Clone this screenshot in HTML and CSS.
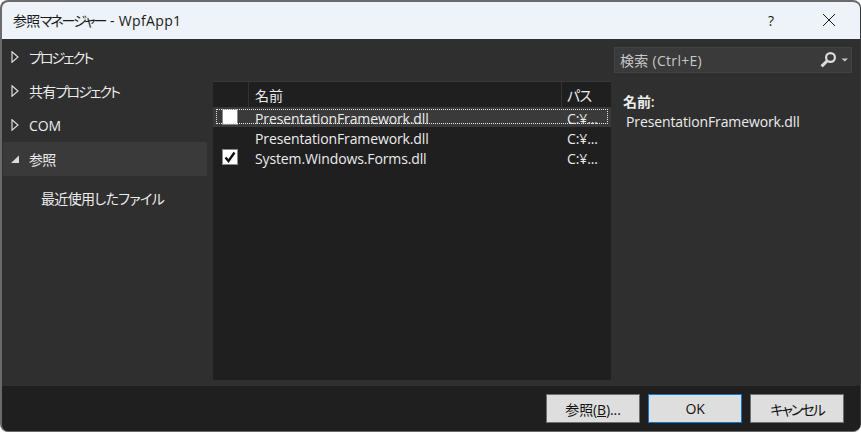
FILE: index.html
```html
<!DOCTYPE html>
<html lang="ja">
<head>
<meta charset="utf-8">
<title>参照マネージャー - WpfApp1</title>
<link rel="stylesheet" href="styles.css">
</head>
<body>
<div class="window">
  <header class="titlebar">
    <div class="title"><span class="jp">参照</span><span class="kana">マネージャー</span> <span class="title-app">- WpfApp1</span></div>
    <div class="help">?</div>
    <svg class="close" width="14" height="14" viewBox="0 0 14 14"><path d="M1 1L13 13M13 1L1 13" stroke="#1a1a1a" stroke-width="1" fill="none"/></svg>
  </header>
  <main class="content">
    <nav class="nav">
      <div class="nav-item"><svg class="arrow" width="8" height="12" viewBox="0 0 8 12"><path d="M1 .8L7 6L1 11.2Z" stroke="#dcdcdc" stroke-width="1.2" fill="none"/></svg><span class="kana">プロジェクト</span></div>
      <div class="nav-item"><svg class="arrow" width="8" height="12" viewBox="0 0 8 12"><path d="M1 .8L7 6L1 11.2Z" stroke="#dcdcdc" stroke-width="1.2" fill="none"/></svg><span><span class="jp">共有</span><span class="kana">プロジェクト</span></span></div>
      <div class="nav-item"><svg class="arrow" width="8" height="12" viewBox="0 0 8 12"><path d="M1 .8L7 6L1 11.2Z" stroke="#dcdcdc" stroke-width="1.2" fill="none"/></svg><span>COM</span></div>
      <div class="nav-item selected"><svg class="arrow" width="8" height="12" viewBox="0 0 8 12"><path d="M0 10L8 10L8 2.5Z" fill="#dcdcdc"/></svg><span class="jp">参照</span></div>
      <div class="nav-sub jp">最近使用したファイル</div>
    </nav>
    <section class="list">
      <div class="list-head">
        <div class="col-check"></div>
        <div class="col-name">名前</div>
        <div class="col-path jp">パス</div>
      </div>
      <div class="row focused">
        <div class="col-check"><span class="check"></span></div>
        <div class="cell-name">PresentationFramework.dll</div>
        <div class="cell-path">C:¥...</div>
      </div>
      <div class="row">
        <div class="col-check"></div>
        <div class="cell-name">PresentationFramework.dll</div>
        <div class="cell-path">C:¥...</div>
      </div>
      <div class="row">
        <div class="col-check"><span class="check"><svg width="14" height="14" viewBox="0 0 14 14"><path d="M2.5 7.5L5.5 11L11.5 2.5" stroke="#111" stroke-width="2.4" fill="none"/></svg></span></div>
        <div class="cell-name">System.Windows.Forms.dll</div>
        <div class="cell-path">C:¥...</div>
      </div>
    </section>
    <aside class="side">
      <div class="search">
        <span class="search-text">検索 (Ctrl+E)</span>
        <svg class="search-icon" width="30" height="20" viewBox="0 0 30 20"><circle cx="11.5" cy="7.5" r="4.4" stroke="#dcdcdc" stroke-width="2.2" fill="none"/><path d="M8 11L2.6 16.4" stroke="#dcdcdc" stroke-width="3" fill="none"/><path d="M22.5 8.5H29L25.75 11.5Z" fill="#c8c8c8"/></svg>
      </div>
      <div class="detail">
        <div class="detail-label">名前:</div>
        <div class="detail-value">PresentationFramework.dll</div>
      </div>
    </aside>
  </main>
  <footer class="footer">
    <button class="btn">参照(<u>B</u>)...</button>
    <button class="btn default">OK</button>
    <button class="btn"><span class="kana-btn">キャンセル</span></button>
  </footer>
</div>
</body>
</html>
```

FILE: styles.css
```css
* { box-sizing: border-box; }
html, body { margin: 0; padding: 0; }
body {
  width: 861px;
  height: 432px;
  overflow: hidden;
  font-family: "Open Sans", "Noto Sans CJK JP", sans-serif;
  font-size: 14px;
  letter-spacing: -0.12px;
  color: #ececec;
}
.jp { font-feature-settings: "palt"; letter-spacing: -0.65px; }
.kana { font-feature-settings: "palt"; letter-spacing: -2px; }
.kana-btn { font-feature-settings: "palt"; letter-spacing: -2px; }
.window {
  width: 861px;
  height: 432px;
  display: flex;
  flex-direction: column;
  background: #2f2f2f;
  border-top: 2px solid #6a6a6a;
  border-left: 2px solid #6a6a6a;
  border-bottom: 1px solid #6a6a6a;
  border-right: 1px solid #3a3a3a;
  border-radius: 8px;
  overflow: hidden;
}
.titlebar {
  height: 37px;
  flex: none;
  display: flex;
  align-items: center;
  background: #edf3f9;
  color: #1a1a1a;
  padding: 0 0 1px 11px;
}
.title { flex: 1; font-size: 14px; }
.title-app { letter-spacing: 0.35px; margin-left: 1px; }
.help { width: 14px; margin-right: 44px; text-align: center; font-size: 14px; }
.close { margin-right: 24px; }
.content {
  flex: 1;
  display: grid;
  grid-template-columns: 211px 398px 1fr;
  min-height: 0;
}
.nav { padding: 0 0 0 1px; width: 205px; }
.nav-item {
  height: 34px;
  display: flex;
  align-items: center;
  gap: 10px;
  padding-left: 8px;
}
.nav-item:nth-child(1) { margin-top: 1px; }
.selected { background: #3a3a3a; }
.arrow { flex: none; }
.nav-sub { padding: 13px 0 0 38px; line-height: 20px; }
.list {
  margin-top: 42px;
  margin-bottom: 6px;
  background: #1f1f1f;
  border-top: 1px solid #3a3a3a;
}
.list-head {
  height: 25px;
  display: flex;
  align-items: center;
}
.col-check { width: 35px; flex: none; display: flex; justify-content: center; align-items: center; padding-right: 2px; }
.list-head .col-check { align-self: stretch; }
.col-name {
  flex: none;
  width: 313px;
  align-self: stretch;
  display: flex;
  align-items: center;
  padding-left: 6px;
  border-left: 1px solid #333;
}
.col-path {
  flex: 1;
  align-self: stretch;
  display: flex;
  align-items: center;
  padding-left: 5px;
  border-left: 1px solid #333;
}
.row {
  height: 20px;
  display: flex;
  align-items: center;
  position: relative;
}
.cell-name, .cell-path { position: relative; top: 1px; }
.focused { background: #3a3a3a; }
.focused::after {
  content: "";
  position: absolute;
  inset: 2px 3px 3px 3px;
  border: 1px dotted #e6e6e6;
}
.check {
  width: 16px;
  height: 16px;
  background: #fff;
  border: 1px solid #8a8a8a;
  display: block;
}
.check svg { display: block; }
.cell-name { width: 312px; padding-left: 7px; flex: none; white-space: nowrap; }
.cell-path { flex: 1; padding-left: 7px; white-space: nowrap; }
.side { padding: 8px 8px 0 3px; }
.search {
  height: 26px;
  display: flex;
  align-items: center;
  justify-content: space-between;
  background: #3a3a3a;
  border: 1px solid #424242;
  padding: 0 2px 0 5px;
  color: #c8c8c8;
}
.search-text { letter-spacing: 0.3px; }
.detail { padding: 19px 0 0 9px; line-height: 20px; }
.detail-label { font-weight: 600; }
.detail-value { padding-left: 3px; white-space: nowrap; }
.footer {
  height: 45px;
  flex: none;
  display: flex;
  justify-content: flex-end;
  gap: 8px;
  background: #1f1f1f;
  padding: 8px 16px 0 0;
}
.btn {
  width: 94px;
  height: 29px;
  background: #dedede;
  border: 1px solid #6f6f6f;
  color: #111;
  font-family: inherit;
  font-size: 14px;
  letter-spacing: -0.12px;
  padding: 0;
}
.default { border-color: #0a78d4; }
```
